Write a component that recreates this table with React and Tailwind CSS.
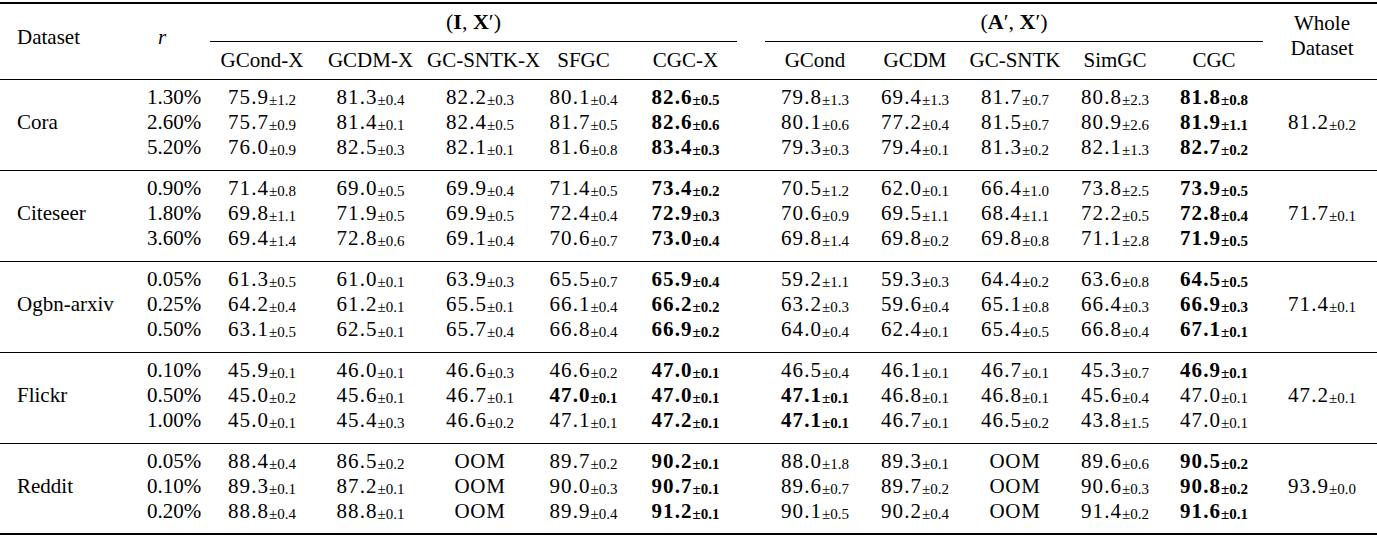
import React from 'react'

const left = ['GCond-X', 'GCDM-X', 'GC-SNTK-X', 'SFGC', 'CGC-X']
const right = ['GCond', 'GCDM', 'GC-SNTK', 'SimGC', 'CGC']

// "*" marks a bold cell, value and std separated by a space
const sections = [
	{
		name: 'Cora',
		whole: '81.2 0.2',
		rows: [
			['1.30%', '75.9 1.2', '81.3 0.4', '82.2 0.3', '80.1 0.4', '*82.6 0.5', '79.8 1.3', '69.4 1.3', '81.7 0.7', '80.8 2.3', '*81.8 0.8'],
			['2.60%', '75.7 0.9', '81.4 0.1', '82.4 0.5', '81.7 0.5', '*82.6 0.6', '80.1 0.6', '77.2 0.4', '81.5 0.7', '80.9 2.6', '*81.9 1.1'],
			['5.20%', '76.0 0.9', '82.5 0.3', '82.1 0.1', '81.6 0.8', '*83.4 0.3', '79.3 0.3', '79.4 0.1', '81.3 0.2', '82.1 1.3', '*82.7 0.2'],
		],
	},
	{
		name: 'Citeseer',
		whole: '71.7 0.1',
		rows: [
			['0.90%', '71.4 0.8', '69.0 0.5', '69.9 0.4', '71.4 0.5', '*73.4 0.2', '70.5 1.2', '62.0 0.1', '66.4 1.0', '73.8 2.5', '*73.9 0.5'],
			['1.80%', '69.8 1.1', '71.9 0.5', '69.9 0.5', '72.4 0.4', '*72.9 0.3', '70.6 0.9', '69.5 1.1', '68.4 1.1', '72.2 0.5', '*72.8 0.4'],
			['3.60%', '69.4 1.4', '72.8 0.6', '69.1 0.4', '70.6 0.7', '*73.0 0.4', '69.8 1.4', '69.8 0.2', '69.8 0.8', '71.1 2.8', '*71.9 0.5'],
		],
	},
	{
		name: 'Ogbn-arxiv',
		whole: '71.4 0.1',
		rows: [
			['0.05%', '61.3 0.5', '61.0 0.1', '63.9 0.3', '65.5 0.7', '*65.9 0.4', '59.2 1.1', '59.3 0.3', '64.4 0.2', '63.6 0.8', '*64.5 0.5'],
			['0.25%', '64.2 0.4', '61.2 0.1', '65.5 0.1', '66.1 0.4', '*66.2 0.2', '63.2 0.3', '59.6 0.4', '65.1 0.8', '66.4 0.3', '*66.9 0.3'],
			['0.50%', '63.1 0.5', '62.5 0.1', '65.7 0.4', '66.8 0.4', '*66.9 0.2', '64.0 0.4', '62.4 0.1', '65.4 0.5', '66.8 0.4', '*67.1 0.1'],
		],
	},
	{
		name: 'Flickr',
		whole: '47.2 0.1',
		rows: [
			['0.10%', '45.9 0.1', '46.0 0.1', '46.6 0.3', '46.6 0.2', '*47.0 0.1', '46.5 0.4', '46.1 0.1', '46.7 0.1', '45.3 0.7', '*46.9 0.1'],
			['0.50%', '45.0 0.2', '45.6 0.1', '46.7 0.1', '*47.0 0.1', '*47.0 0.1', '*47.1 0.1', '46.8 0.1', '46.8 0.1', '45.6 0.4', '47.0 0.1'],
			['1.00%', '45.0 0.1', '45.4 0.3', '46.6 0.2', '47.1 0.1', '*47.2 0.1', '*47.1 0.1', '46.7 0.1', '46.5 0.2', '43.8 1.5', '47.0 0.1'],
		],
	},
	{
		name: 'Reddit',
		whole: '93.9 0.0',
		rows: [
			['0.05%', '88.4 0.4', '86.5 0.2', 'OOM', '89.7 0.2', '*90.2 0.1', '88.0 1.8', '89.3 0.1', 'OOM', '89.6 0.6', '*90.5 0.2'],
			['0.10%', '89.3 0.1', '87.2 0.1', 'OOM', '90.0 0.3', '*90.7 0.1', '89.6 0.7', '89.7 0.2', 'OOM', '90.6 0.3', '*90.8 0.2'],
			['0.20%', '88.8 0.4', '88.8 0.1', 'OOM', '89.9 0.4', '*91.2 0.1', '90.1 0.5', '90.2 0.4', 'OOM', '91.4 0.2', '*91.6 0.1'],
		],
	},
]

function Val({ v }) {
	if (v === 'OOM') return <span className="tracking-[0.03em]">OOM</span>
	const bold = v.startsWith('*')
	const [m, s] = v.replace('*', '').split(' ')
	return (
		<span className={bold ? 'font-bold' : ''}>
			<span className="tracking-[0.05em]">{m}</span>
			<span className="relative top-[1px] text-[15px] leading-[0]">±{s}</span>
		</span>
	)
}

export default function App() {
	return (
		<div className="bg-white text-black pt-[2px]" style={{ fontFamily: '"Liberation Serif", "Times New Roman", serif' }}>
			<table className="table-fixed w-[1377px] border-separate border-spacing-0 text-[21px] leading-[25px]">
				<colgroup>
					<col className="w-[130px]" />
					<col className="w-[80px]" />
					<col className="w-[104px]" />
					<col className="w-[113px]" />
					<col className="w-[106px]" />
					<col className="w-[101px]" />
					<col className="w-[103px]" />
					<col className="w-[28px]" />
					<col className="w-[100px]" />
					<col className="w-[100px]" />
					<col className="w-[100px]" />
					<col className="w-[100px]" />
					<col className="w-[98px]" />
					<col className="w-[114px]" />
				</colgroup>
				<thead>
					<tr>
						<th rowSpan={2} className="border-t-2 border-black text-left pl-[17px] pb-[8px] font-normal align-middle">Dataset</th>
						<th rowSpan={2} className="border-t-2 border-black font-normal italic align-middle p-0 pb-[8px] pr-[16px]">r</th>
						<th colSpan={5} className="border-t-2 border-b border-black h-[40px] p-0 pb-[2px] font-normal align-middle text-[22px]">
							(<b>I</b>, <b>X</b>′)
						</th>
						<th className="border-t-2 border-black p-0" />
						<th colSpan={5} className="border-t-2 border-b border-black h-[40px] p-0 pb-[2px] font-normal align-middle text-[22px]">
							(<b>A</b>′, <b>X</b>′)
						</th>
						<th rowSpan={2} className="border-t-2 border-black font-normal align-middle leading-[25px] p-0 pb-[11px] pl-[4px]">
							Whole
							<br />
							Dataset
						</th>
					</tr>
					<tr>
						{left.map((h) => (
							<th key={h} className="h-[37px] p-0 font-normal align-middle whitespace-nowrap">{h}</th>
						))}
						<th className="p-0" />
						{right.map((h) => (
							<th key={h} className="h-[37px] p-0 font-normal align-middle whitespace-nowrap">{h}</th>
						))}
					</tr>
				</thead>
				<tbody>
					{sections.map((sec, si) => {
						const last = si === sections.length - 1
						return sec.rows.map((row, ri) => {
							const top = ri === 0 ? 'border-t border-black pt-[5px]' : ''
							const bot = ri === 2 ? (last ? 'border-b-2 border-black pb-[9px]' : 'pb-[10px]') : ''
							const cell = `p-0 text-center whitespace-nowrap ${top} ${bot}`
							return (
								<tr key={sec.name + ri}>
									{ri === 0 && (
										<td rowSpan={3} className={`p-0 pl-[17px] pb-[5px] text-left align-middle border-t border-black ${last ? 'border-b-2' : ''}`}>
											{sec.name}
										</td>
									)}
									<td className={`${cell} pl-[8px]`}>{row[0]}</td>
									{row.slice(1, 6).map((v, i) => (
										<td key={i} className={cell}>
											<Val v={v} />
										</td>
									))}
									<td className={cell} />
									{row.slice(6).map((v, i) => (
										<td key={i} className={cell}>
											<Val v={v} />
										</td>
									))}
									{ri === 0 && (
										<td rowSpan={3} className={`p-0 pb-[5px] pl-[4px] text-center align-middle whitespace-nowrap border-t border-black ${last ? 'border-b-2' : ''}`}>
											<Val v={sec.whole} />
										</td>
									)}
								</tr>
							)
						})
					})}
				</tbody>
			</table>
		</div>
	)
}
